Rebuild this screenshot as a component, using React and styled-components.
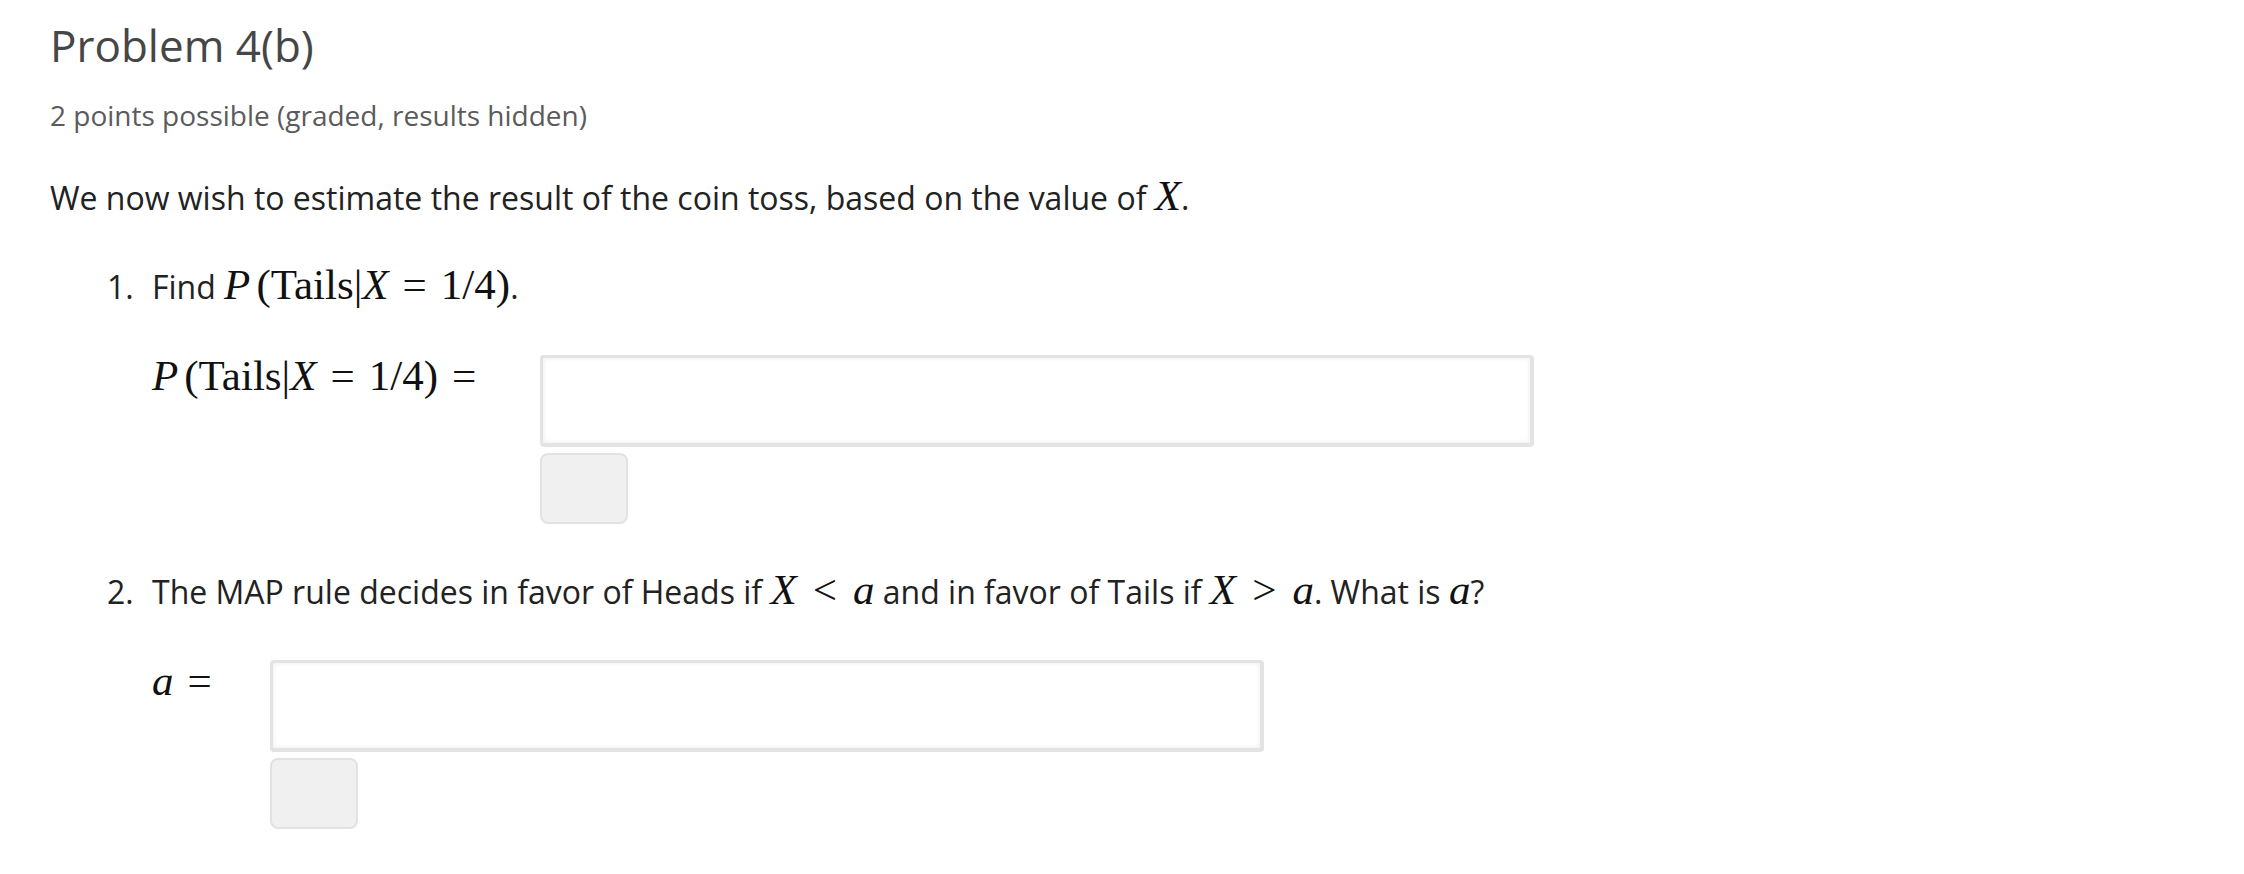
import React from "react";
import styled, { createGlobalStyle } from "styled-components";

const GlobalStyle = createGlobalStyle`
  html, body {
    margin: 0;
    padding: 0;
    background: #ffffff;
  }
  body {
    font-family: "Open Sans", "Noto Sans", sans-serif;
    color: #313131;
  }
`;

const Page = styled.div`
  padding: 19px 50px 40px;
`;

const Title = styled.h3`
  margin: 0;
  font-size: 44px;
  line-height: 52px;
  font-weight: 400;
  color: #464646;
`;

const Meta = styled.div`
  margin-top: 26px;
  font-size: 28px;
  line-height: 36px;
  color: #5b5b5b;
`;

const Para = styled.p`
  margin: 43px 0 0;
  font-size: 32px;
  line-height: 44px;
  color: #222222;
`;

const List = styled.ol`
  list-style: none;
  margin: 45px 0 0;
  padding: 0 0 0 57px;
  display: flex;
  flex-direction: column;
  gap: 46px;
`;

const Item = styled.li`
  display: grid;
  grid-template-columns: 45px 1fr;
  font-size: 32px;
  line-height: 44px;
  color: #222222;
`;

const Num = styled.span``;

const Body = styled.div`
  display: flex;
  flex-direction: column;
  gap: 46px;
`;

const Math = styled.span`
  font-family: "Liberation Serif", "Times New Roman", serif;
  font-size: 43px;
  line-height: 0.8;
  color: #111111;
  white-space: nowrap;
`;

const V = styled.span`
  font-style: italic;
  margin-right: ${(p) => p.$mr || 0}px;
`;

const Op = styled.span`
  margin: 0 ${(p) => p.$gap ?? 14}px;
`;

const AnswerRow = styled.div`
  display: flex;
  align-items: flex-start;
  gap: ${(p) => p.$gap}px;
`;

const Label = styled.label`
  line-height: 44px;
  padding-top: 1px;
`;

const Field = styled.div`
  display: flex;
  flex-direction: column;
  align-items: flex-start;
  gap: 6px;
`;

const Input = styled.input`
  box-sizing: border-box;
  width: 994px;
  height: 92px;
  border: 3px solid #e3e3e3;
  border-bottom-width: 4px;
  border-right-width: 4px;
  border-radius: 4px;
  background: #ffffff;
  box-shadow: inset 0 0 4px 1px rgba(0, 0, 0, 0.06);
  outline: none;
  font: inherit;
`;

const CheckButton = styled.button`
  box-sizing: border-box;
  width: 88px;
  height: 71px;
  background: #f0f0f0;
  border: 2px solid #e2e2e2;
  border-radius: 8px;
  padding: 0;
`;

const TailsExpr = () => (
  <>
    <V $mr={6}>P</V>(Tails|<V>X</V>
    <Op>=</Op>1/4)
  </>
);

export default function App() {
  return (
    <>
      <GlobalStyle />
      <Page>
        <Title>Problem 4(b)</Title>
        <Meta>2 points possible (graded, results hidden)</Meta>
        <Para>
          We now wish to estimate the result of the coin toss, based on the
          value of{" "}
          <Math>
            <V>X</V>
          </Math>
          .
        </Para>
        <List>
          <Item>
            <Num>1.</Num>
            <Body>
              <div>
                Find{" "}
                <Math>
                  <TailsExpr />
                </Math>
                .
              </div>
              <AnswerRow $gap={50}>
                <Label>
                  <Math>
                    <TailsExpr />
                    <Op>=</Op>
                  </Math>
                </Label>
                <Field>
                  <Input type="text" />
                  <CheckButton type="button" aria-label="submit" />
                </Field>
              </AnswerRow>
            </Body>
          </Item>
          <Item>
            <Num>2.</Num>
            <Body>
              <div>
                The MAP rule decides in favor of Heads if{" "}
                <Math>
                  <V>X</V>
                  <Op $gap={16}>&lt;</Op>
                  <V>a</V>
                </Math>{" "}
                and in favor of Tails if{" "}
                <Math>
                  <V>X</V>
                  <Op $gap={16}>&gt;</Op>
                  <V>a</V>
                </Math>
                . What is{" "}
                <Math>
                  <V>a</V>
                </Math>
                ?
              </div>
              <AnswerRow $gap={44}>
                <Label>
                  <Math>
                    <V>a</V>
                    <Op>=</Op>
                  </Math>
                </Label>
                <Field>
                  <Input type="text" />
                  <CheckButton type="button" aria-label="submit" />
                </Field>
              </AnswerRow>
            </Body>
          </Item>
        </List>
      </Page>
    </>
  );
}
